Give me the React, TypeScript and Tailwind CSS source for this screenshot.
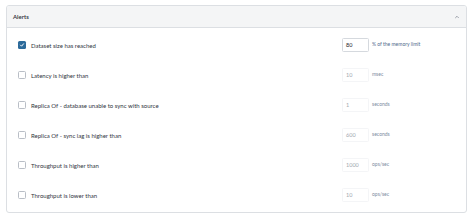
import { ChevronUp } from "lucide-react";

type AlertRow = {
  label: string;
  value: string;
  unit: string;
  checked?: boolean;
};

const rows: AlertRow[] = [
  { label: "Dataset size has reached", value: "80", unit: "% of the memory limit", checked: true },
  { label: "Latency is higher than", value: "10", unit: "msec" },
  { label: "Replica Of - database unable to sync with source", value: "1", unit: "seconds" },
  { label: "Replica Of - sync lag is higher than", value: "600", unit: "seconds" },
  { label: "Throughput is higher than", value: "1000", unit: "ops/sec" },
  { label: "Throughput is lower than", value: "10", unit: "ops/sec" },
];

function Checkbox({ checked }: { checked?: boolean }) {
  if (checked) {
    return (
      <span className="flex h-[8px] w-[8px] items-center justify-center rounded-[1.5px] bg-[#2c6a9a]">
        <svg viewBox="0 0 10 10" className="h-[6px] w-[6px]" fill="none" stroke="white" strokeWidth="1.6" strokeLinecap="round" strokeLinejoin="round">
          <path d="M2.5 5.2 4.3 7 7.6 3" />
        </svg>
      </span>
    );
  }
  return <span className="h-[8px] w-[8px] rounded-[1.5px] border border-[#b9bec6] bg-white" />;
}

export default function App() {
  return (
    <div className="h-[218px] w-[474px] bg-white pl-[6px] pt-[5px] font-['Lato',sans-serif]">
      <div className="w-[461px] h-[208px] overflow-hidden rounded-[3px] border border-[#dcdfe3] bg-white">
        <div className="flex h-[22px] items-center justify-between border-b border-[#dcdfe3] bg-[#f4f5f6] pl-[6px] pr-[6px]">
          <span className="text-[6px] font-semibold text-[#2b2f36]">Alerts</span>
          <ChevronUp className="h-[6px] w-[6px] text-[#6b7280]" strokeWidth={2.5} />
        </div>
        <div className="pt-[2px]">
          {rows.map((row) => (
            <div key={row.label} className="grid h-[30px] grid-cols-[321px_27px_1fr] items-center gap-x-[3px] pl-[11px]">
              <div className="flex items-center gap-[5px]">
                <Checkbox checked={row.checked} />
                <span className="text-[6px] text-[#2f3540]">{row.label}</span>
              </div>
              <div
                className={
                  row.checked
                    ? "flex h-[14px] items-center rounded-[1.5px] border border-[#d5d9de] bg-white pl-[3px] text-[5.5px] text-[#1f2329]"
                    : "flex h-[14px] items-center rounded-[1.5px] border border-[#f4f5f7] bg-white pl-[3px] text-[5.5px] text-[#a3a8b0]"
                }
              >
                {row.value}
              </div>
              <span className={row.checked ? "text-[5px] text-[#4f6a8c]" : "text-[5px] text-[#7d8ba0]"}>{row.unit}</span>
            </div>
          ))}
        </div>
      </div>
    </div>
  );
}
